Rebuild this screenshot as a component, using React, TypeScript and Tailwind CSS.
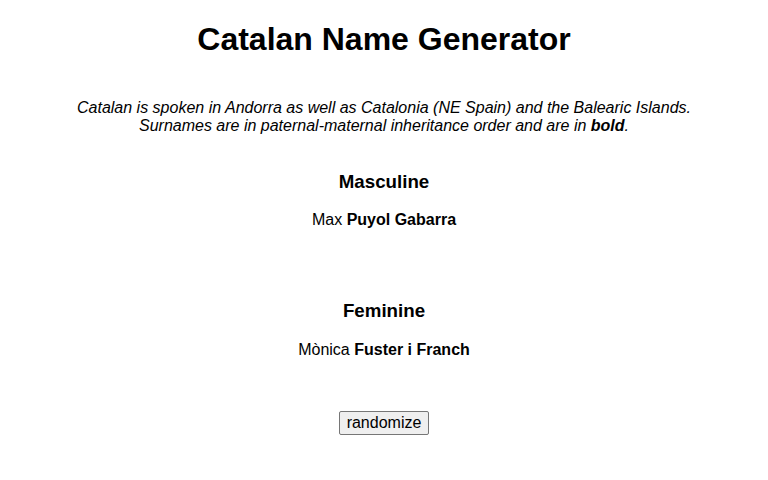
import React, { useState } from "react";

const masculine = [
  { first: "Max", last: "Puyol Gabarra" },
  { first: "Jordi", last: "Serra Vidal" },
  { first: "Pere", last: "Font i Roca" },
];
const feminine = [
  { first: "Mònica", last: "Fuster i Franch" },
  { first: "Núria", last: "Casals Ferrer" },
  { first: "Laia", last: "Puig Soler" },
];

export default function App() {
  const [i, setI] = useState(0);
  const m = masculine[i % masculine.length];
  const f = feminine[i % feminine.length];

  return (
    <div className="flex flex-col items-center bg-white text-black text-center font-['Liberation_Sans',Arial,sans-serif] min-h-[480px]">
      <h1 className="mt-[21px] text-[32px] leading-[37px] font-bold">Catalan Name Generator</h1>

      <p className="mt-[41px] text-base leading-[18px] italic">
        Catalan is spoken in Andorra as well as Catalonia (NE Spain) and the Balearic Islands.
        <br />
        Surnames are in paternal-maternal inheritance order and are in <b>bold</b>.
      </p>

      <h3 className="mt-[36px] text-[18.72px] leading-[22px] font-bold">Masculine</h3>
      <p className="mt-[18px] text-base leading-[18px]">
        {m.first} <b>{m.last}</b>
      </p>

      <h3 className="mt-[71px] text-[18.72px] leading-[22px] font-bold">Feminine</h3>
      <p className="mt-[19px] text-base leading-[18px]">
        {f.first} <b>{f.last}</b>
      </p>

      <button
        onClick={() => setI(i + 1)}
        className="mt-[52px] h-[24px] px-[7px] text-base leading-[18px] bg-[#efefef] border border-[#767676] rounded-[2px] text-black"
      >
        randomize
      </button>
    </div>
  );
}
